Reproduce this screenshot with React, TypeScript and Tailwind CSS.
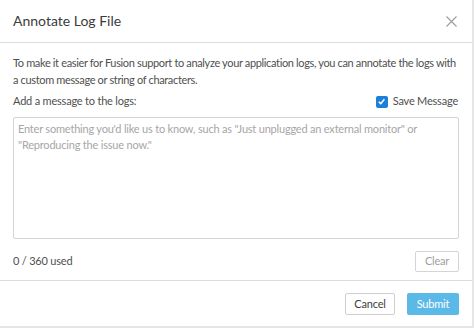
import React from "react";

export default function App() {
  return (
    <div className="w-[474px] h-[328px] bg-[#e6e6e6] overflow-hidden" style={{ fontFamily: 'Lato, "Noto Sans", sans-serif' }}>
      <div className="w-[472px] h-[326px] bg-white flex flex-col">
        <div className="h-[43px] flex items-center justify-between pl-[13px] pr-[15px] border-b border-[#dcdcdc] shrink-0">
          <div className="text-[14px] text-[#3c3c3c] pb-[1px]">Annotate Log File</div>
          <svg width="11" height="11" viewBox="0 0 11 11">
            <path d="M0.5 0.5 L10.5 10.5 M10.5 0.5 L0.5 10.5" stroke="#9c9c9c" strokeWidth="1.1" />
          </svg>
        </div>
        <div className="px-[13px] pt-[11px] flex flex-col text-[11px] tracking-[-0.2px]">
          <p className="leading-[17px] text-[#4f4f4f] tracking-[-0.35px]">
            To make it easier for Fusion support to analyze your application logs, you can annotate the logs with
            <br />
            a custom message or string of characters.
          </p>
          <div className="flex items-center justify-between mt-[5px] h-[17px]">
            <span className="text-[#4f4f4f]">Add a message to the logs:</span>
            <label className="flex items-center gap-[5px] pr-[1px]">
              <span className="w-[12px] h-[12px] rounded-[2px] bg-[#1e7fd8] flex items-center justify-center">
                <svg width="9" height="9" viewBox="0 0 10 10">
                  <path d="M2 5.2 L4.2 7.4 L8.2 2.6" stroke="white" strokeWidth="1.7" fill="none" />
                </svg>
              </span>
              <span className="text-[#4f4f4f]">Save Message</span>
            </label>
          </div>
          <div className="mt-[7px] h-[122px] border border-[#d4d4d4] rounded-[2px] px-[4px] pt-[3px] leading-[16px] text-[#a6a6a6]">
            Enter something you'd like us to know, such as "Just unplugged an external monitor" or "Reproducing the issue now."
          </div>
          <div className="flex items-center justify-between mt-[12px]">
            <span className="text-[#4f4f4f]">0 / 360 used</span>
            <button className="w-[44px] h-[21px] border border-[#d4d4d4] rounded-[2px] text-[#a0a0a0] bg-white">Clear</button>
          </div>
        </div>
        <div className="mt-[8px] border-t border-[#dcdcdc] flex justify-end gap-[12px] px-[13px] pt-[12px] text-[11px] tracking-[-0.2px]">
          <button className="w-[50px] h-[22px] border border-[#cfcfcf] rounded-[2px] text-[#3c3c3c] bg-white">Cancel</button>
          <button className="w-[52px] h-[22px] rounded-[2px] text-white bg-[#5ab9e6]">Submit</button>
        </div>
      </div>
    </div>
  );
}
